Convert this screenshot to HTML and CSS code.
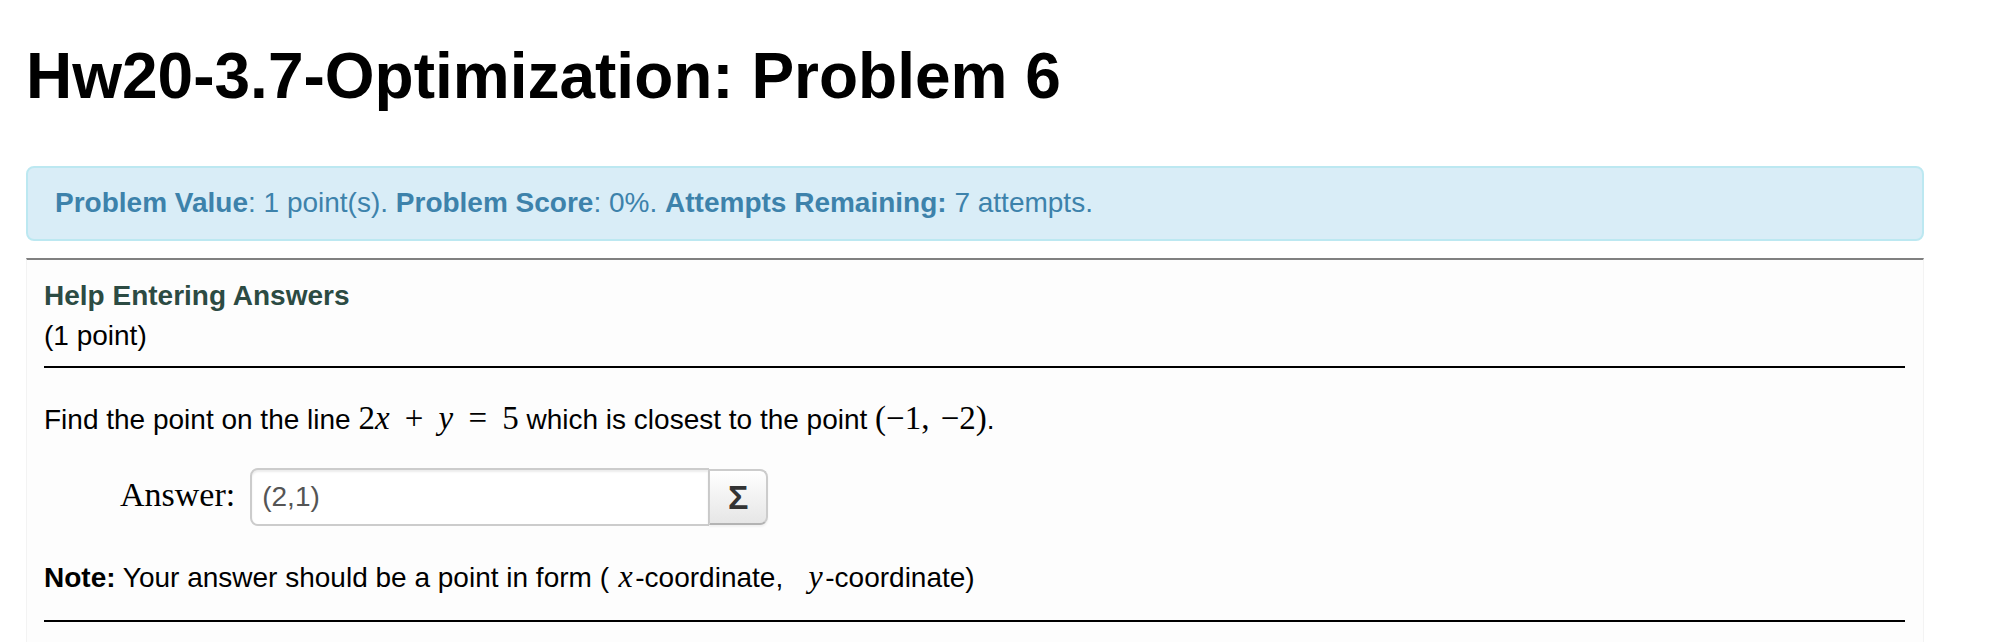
FILE: index.html
```html
<!DOCTYPE html>
<html lang="en">
<head>
<meta charset="utf-8">
<title>Hw20-3.7-Optimization: Problem 6</title>
<link rel="stylesheet" href="styles.css">
</head>
<body>
<div class="page">
  <h1 class="title">Hw20-3.7-Optimization: Problem 6</h1>
  <div class="alert"><b>Problem Value</b>: 1 point(s). <b>Problem Score</b>: 0%. <b>Attempts Remaining:</b> 7 attempts.</div>
  <div class="problem">
    <div class="problem-head">
      <div class="help">Help Entering Answers</div>
      <div class="points">(1 point)</div>
    </div>
    <p class="question">Find the point on the line <span class="math">2<i>x</i><span class="op">+</span><i>y</i><span class="rel">=</span>5</span> which is closest to the point <span class="math">(−1,<span class="comma"></span>−2)</span>.</p>
    <div class="answer-row">
      <span class="answer-label">Answer:</span>
      <div class="input-group">
        <input class="answer-input" type="text" value="(2,1)">
        <button class="sigma" type="button">Σ</button>
      </div>
    </div>
    <p class="note"><b>Note:</b> Your answer should be a point in form (<i class="mv">x</i>-coordinate, <i class="mv mv2">y</i>-coordinate)</p>
    <div class="rule"></div>
  </div>
</div>
</body>
</html>
```

FILE: styles.css
```css
html, body {
  margin: 0;
  padding: 0;
  background: #ffffff;
}

body {
  font-family: "Liberation Sans", Arial, Helvetica, sans-serif;
  font-size: 28px;
  line-height: 40px;
  color: #000;
}

.page {
  width: 1898px;
  margin-left: 26px;
}

.title {
  margin: 41px 0 0;
  font-size: 64px;
  line-height: 70px;
  font-weight: bold;
  color: #000;
}

.alert {
  margin-top: 55px;
  padding: 15px 27px 16px;
  background: #d9edf7;
  border: 2px solid #bce8f1;
  border-radius: 8px;
  color: #3d82ab;
}

.alert b {
  font-weight: bold;
}

.problem {
  margin-top: 17px;
  border-top: 2px solid #808080;
  border-left: 1px solid #f3f3f3;
  border-right: 1px solid #f3f3f3;
  background: #fdfdfd;
  padding: 16px 18px 20px 17px;
}

.problem-head {
  border-bottom: 2px solid #000;
  padding-bottom: 10px;
}

.help {
  font-weight: bold;
  color: #2c4b43;
}

.question {
  margin: 30px 0 0;
}

.math {
  font-family: "Liberation Serif", "Times New Roman", serif;
  font-size: 33px;
}

.math i {
  font-style: italic;
}

.op {
  margin: 0 0.46em;
}

.rel {
  margin: 0 0.46em;
}

.comma {
  display: inline-block;
  width: 0.34em;
}

.answer-row {
  display: flex;
  align-items: baseline;
  margin-top: 28px;
  padding-left: 76px;
}

.answer-label {
  font-family: "Liberation Serif", "Times New Roman", serif;
  font-size: 34px;
  margin-right: 15px;
}

.input-group {
  display: flex;
  align-items: stretch;
  height: 58px;
}

.answer-input {
  box-sizing: border-box;
  width: 459px;
  height: 58px;
  margin: 0;
  padding: 0 10px;
  border: 2px solid #cccccc;
  border-right: 1px solid #cccccc;
  border-radius: 8px 0 0 8px;
  background: #fff;
  box-shadow: inset 0 2px 2px rgba(0, 0, 0, 0.075);
  font-family: "Liberation Sans", Arial, sans-serif;
  font-size: 28px;
  color: #555;
  outline: none;
}

.sigma {
  box-sizing: border-box;
  width: 59px;
  height: 56px;
  margin: 1px 0 0;
  padding: 0;
  border: 2px solid #cccccc;
  border-left: 1px solid #cccccc;
  border-bottom-color: #b3b3b3;
  border-radius: 0 8px 8px 0;
  background: linear-gradient(#ffffff, #e6e6e6);
  box-shadow: 0 2px 2px rgba(0, 0, 0, 0.05);
  font-family: "Liberation Sans", Arial, sans-serif;
  font-size: 34px;
  font-weight: bold;
  color: #333;
  line-height: 52px;
}

.note {
  margin: 30px 0 0;
}

.mv {
  font-family: "Liberation Serif", "Times New Roman", serif;
  font-size: 32px;
  font-style: italic;
  margin-left: 0.3em;
  margin-right: 0.08em;
}

.mv2 {
  margin-left: 0.55em;
}

.rule {
  margin-top: 22px;
  border-top: 2px solid #000;
}
```
